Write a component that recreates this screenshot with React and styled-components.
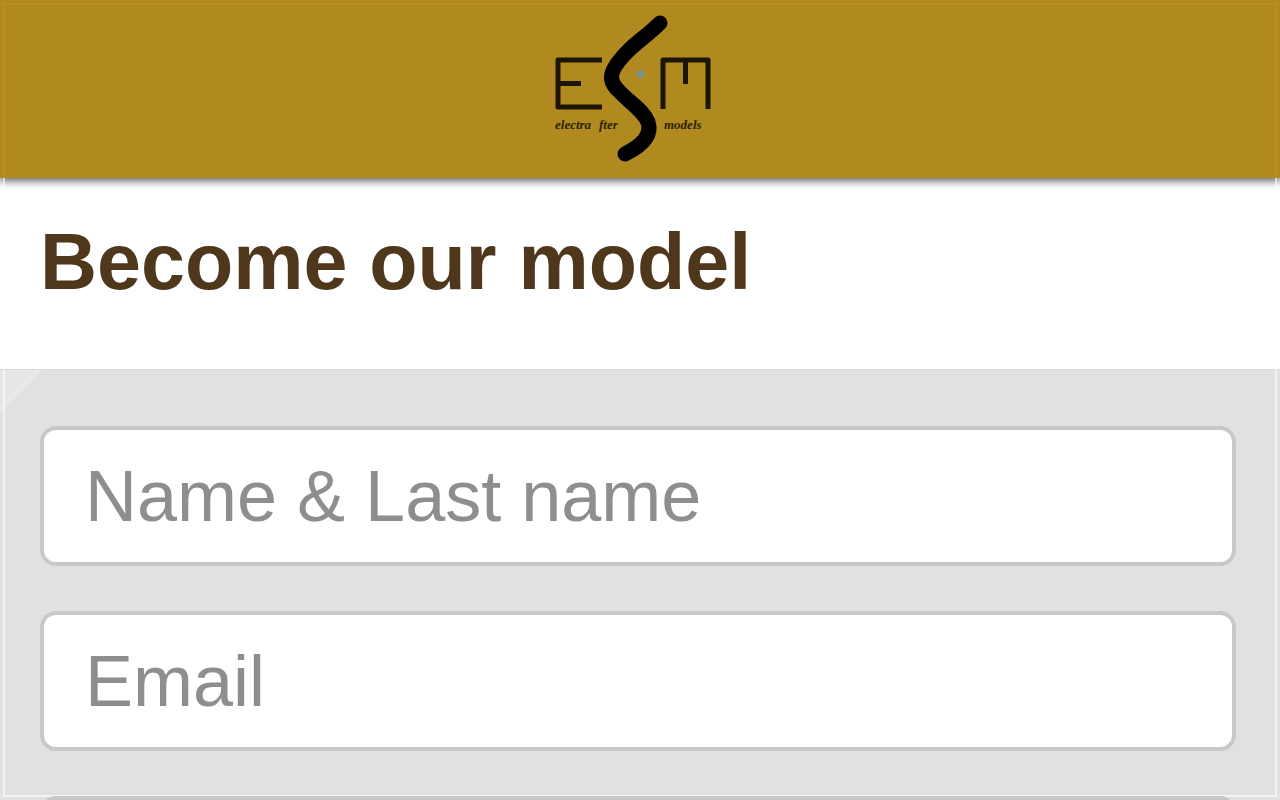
import React from "react";
import styled, { createGlobalStyle } from "styled-components";

const GlobalStyle = createGlobalStyle`
  *, *::before, *::after { box-sizing: border-box; }
  html, body { margin: 0; }
  body {
    background: #fff;
    font-family: "Liberation Sans", Arial, Helvetica, sans-serif;
  }
`;

const Page = styled.div`
  display: flex;
  flex-direction: column;
  height: 100vh;
  overflow: hidden auto;
  scrollbar-width: none;
`;

const Header = styled.header`
  display: flex;
  flex: none;
  justify-content: center;
  position: relative;
  padding: 8px 16px 10px 0;
  background: #b08a1e;
  box-shadow: 0 2px 8px 1px #60606a;

  &::after {
    content: "";
    position: absolute;
    inset: 3px 3px 0;
    border: 2px solid #b98f1f;
    border-bottom: 0;
    pointer-events: none;
  }
`;

const HomeLink = styled.a`
  display: block;
  color: #000;
`;

const LogoSvg = styled.svg`
  display: block;
  width: 176px;
  height: 160px;
`;

const Intro = styled.section`
  flex: none;
  padding: 38px 40px 61px;
`;

const Title = styled.h1`
  margin: 0;
  color: #4f371c;
  font-size: 79px;
  line-height: 92px;
  font-weight: 700;
`;

const Form = styled.form`
  display: flex;
  flex-direction: column;
  flex: 1 0 auto;
  gap: 45px;
  padding: 56px 44px 56px 40px;
  background: linear-gradient(135deg, #e6e6e6 24px, #eaeaea 28px, #e1e1e1 31px);
  border-top: 1px solid #d9d9d9;
`;

const Field = styled.input`
  position: relative;
  z-index: 2;
  width: 100%;
  height: 140px;
  padding: 0 41px;
  border: 4px solid #c8c8c8;
  border-radius: 16px;
  background: #fff;
  color: #4f371c;
  font-family: inherit;
  font-size: 72px;
  outline: none;

  &::placeholder {
    color: #8e8e8e;
    opacity: 1;
  }

  &:focus { border-color: #b08a1e; }
`;

const Frame = styled.div`
  position: fixed;
  inset: 3px;
  z-index: 1;
  border: 2px solid rgba(255, 255, 255, 0.6);
  border-top: 0;
  pointer-events: none;
  clip-path: inset(175px 0 0 0);
`;

function Logo() {
  return (
    <LogoSvg viewBox="544 8 176 160" role="img" aria-label="ESM">
      <g fill="none" stroke="#1c1503" strokeWidth="5" strokeLinejoin="round">
        <path d="M602 60H558V107H602M558 83.5H581" />
        <path d="M663 109V60H708V109M685.5 60V84" />
      </g>
      <path
        d="M660 23C649 34 637 42 628 51C609 70 607 80 619 91C630 103 643 110 648 122C653 137 639 147 625 154"
        fill="none"
        stroke="#000"
        strokeWidth="15"
        strokeLinecap="round"
        strokeLinejoin="round"
      />
      <circle cx="640.5" cy="74" r="4" fill="#789687" />
      <g
        fill="#2c2205"
        fontFamily="'Liberation Serif', serif"
        fontStyle="italic"
        fontWeight="700"
        fontSize="13"
      >
        <text x="555" y="129">electra</text>
        <text x="599" y="129">fter</text>
        <text x="664" y="129">models</text>
      </g>
    </LogoSvg>
  );
}

export default function App() {
  return (
    <>
      <GlobalStyle />
      <Page>
        <Header>
          <HomeLink href="#">
            <Logo />
          </HomeLink>
        </Header>
        <Intro>
          <Title>Become our model</Title>
        </Intro>
        <Form>
          <Field type="text" name="name" aria-label="Name & Last name" placeholder="Name & Last name" />
          <Field type="email" name="email" aria-label="Email" placeholder="Email" />
          <Field type="tel" name="phone" aria-label="Phone" />
        </Form>
      </Page>
      <Frame />
    </>
  );
}
